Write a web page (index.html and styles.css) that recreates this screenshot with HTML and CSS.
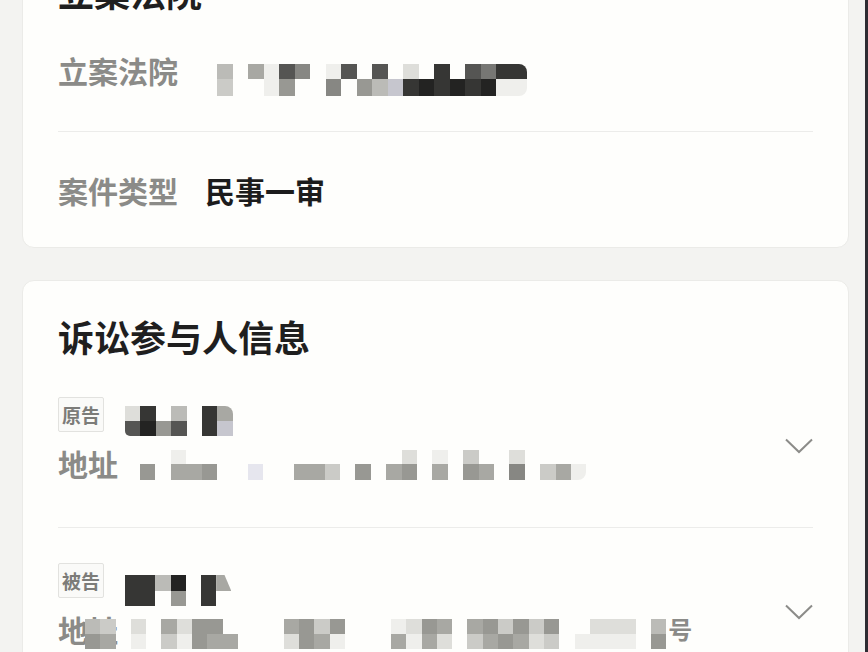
FILE: index.html
```html
<!DOCTYPE html>
<html lang="zh-CN">
<head>
<meta charset="utf-8">
<title>案件信息</title>
<link rel="stylesheet" href="styles.css">
</head>
<body>
<div class="screen">
  <div class="feed">
    <section class="card card-first">
      <h2 class="card-title">立案法院</h2>
      <div class="field">
        <span class="field-label">立案法院</span>
        <div class="mosaic m-court">
          <i class="k4"></i><i></i><i class="k5"></i><i class="k1"></i><i class="k9"></i><i class="k7"></i><i></i><i class="k1"></i><i class="k9"></i><i></i><i class="k9"></i><i></i><i class="k2"></i><i></i><i class="k10"></i><i></i><i class="k9"></i><i class="k8"></i><i class="k10"></i><i class="k10 r-tr"></i>
          <i class="k3"></i><i></i><i></i><i class="k1"></i><i class="k6"></i><i></i><i></i><i class="k7"></i><i></i><i class="k6"></i><i class="k4"></i><i class="kb"></i><i class="k10"></i><i class="k11"></i><i class="k10"></i><i class="k11"></i><i class="k10"></i><i class="k11"></i><i class="k1"></i><i class="k1 r-br"></i>
        </div>
      </div>
      <div class="field field-last">
        <span class="field-label">案件类型</span>
        <span class="field-value">民事一审</span>
      </div>
    </section>

    <section class="card card-parties">
      <h2 class="card-title">诉讼参与人信息</h2>

      <div class="party">
        <div class="party-info">
          <div class="party-head">
            <span class="tag">原告</span>
            <div class="mosaic m-name">
              <i class="k2"></i><i class="k10"></i><i></i><i class="k4"></i><i></i><i class="k10"></i><i class="k5 r-tr"></i>
              <i class="k9 r-bl"></i><i class="k11"></i><i class="k6"></i><i class="k9"></i><i></i><i class="k10"></i><i class="kb"></i>
            </div>
          </div>
          <div class="addr">
            <span class="field-label">地址</span>
            <div class="mosaic m-addr1">
              <i></i><i></i><i class="k1"></i><i></i><i></i><i></i><i></i><i></i><i></i><i></i><i></i><i></i><i></i><i></i><i></i><i></i><i></i><i class="k2"></i><i></i><i class="k1"></i><i></i><i class="k3"></i><i></i><i></i><i class="k2"></i><i></i><i></i><i></i><i></i>
              <i class="k6"></i><i></i><i class="k5"></i><i class="k5"></i><i class="k6"></i><i></i><i></i><i class="kl"></i><i></i><i></i><i class="k5"></i><i class="k5"></i><i class="k3"></i><i></i><i class="k6"></i><i></i><i class="k5"></i><i class="k6"></i><i></i><i class="k5"></i><i></i><i class="k6"></i><i class="k5"></i><i></i><i class="k7"></i><i></i><i class="k3"></i><i class="k5"></i><i class="k1 r-br"></i>
            </div>
          </div>
        </div>
        <svg class="chevron" width="28" height="16" viewBox="0 0 28 16"><polyline points="1,1.5 14,14 27,1.5" fill="none" stroke="#8c8c89" stroke-width="2"/></svg>
      </div>

      <div class="party">
        <div class="party-info">
          <div class="party-head">
            <span class="tag">被告</span>
            <div class="mosaic m-name2">
              <i class="k10"></i><i class="k10"></i><i class="k4"></i><i class="k11"></i><i></i><i class="k10"></i><i class="k5 tri"></i>
              <i class="k10"></i><i class="k10"></i><i></i><i class="k6"></i><i></i><i class="k10"></i><i></i>
            </div>
          </div>
          <div class="addr">
            <span class="field-label">地址</span>
            <div class="mosaic m-addr2">
              <i class="k4"></i><i class="k3"></i><i></i><i class="k2"></i><i></i><i class="k5"></i><i class="k2"></i><i class="k6"></i><i class="k6"></i><i></i><i></i><i></i><i></i><i class="k5"></i><i class="k6"></i><i class="k3"></i><i class="k6"></i><i></i><i></i><i></i><i class="k1"></i><i class="k2"></i><i class="k6"></i><i class="k5"></i><i></i><i class="k5"></i><i class="k6"></i><i class="k3"></i><i class="k6"></i><i class="k3"></i><i class="k6"></i><i></i><i></i><i class="k2"></i><i class="k2"></i><i class="k2"></i><i></i><i class="k4"></i>
              <i class="k6"></i><i class="k5"></i><i></i><i class="k1"></i><i></i><i class="k3"></i><i class="k1"></i><i class="k6"></i><i class="k5"></i><i class="k5"></i><i></i><i></i><i></i><i class="k2"></i><i class="k6"></i><i class="k5"></i><i class="k1"></i><i></i><i></i><i></i><i class="k5"></i><i class="k1"></i><i class="k5"></i><i class="k2"></i><i></i><i class="k3"></i><i class="k5"></i><i class="k6"></i><i class="k5"></i><i class="k2"></i><i class="k3"></i><i></i><i class="k1"></i><i class="k1"></i><i class="k1"></i><i class="k1"></i><i></i><i class="k6"></i>
            </div>
            <span class="addr-tail">号</span>
          </div>
        </div>
        <svg class="chevron" width="28" height="16" viewBox="0 0 28 16"><polyline points="1,1.5 14,14 27,1.5" fill="none" stroke="#8c8c89" stroke-width="2"/></svg>
      </div>
    </section>
  </div>
  <div class="edge"></div>
</div>
</body>
</html>
```

FILE: styles.css
```css
* {
  box-sizing: border-box;
}

html, body {
  margin: 0;
  padding: 0;
  height: 652px;
  overflow: hidden;
}

body {
  background: #f3f3f1;
  font-family: "Noto Sans CJK SC", "Noto Sans", sans-serif;
  color: #1e1e1e;
}

.screen {
  display: flex;
  height: 652px;
  overflow: hidden;
}

.feed {
  flex: 1;
  padding: 0 16px 0 22px;
  display: flex;
  flex-direction: column;
  gap: 32px;
}

.edge {
  width: 3px;
  background: #2e2b33;
  flex-shrink: 0;
}

.card {
  background: #fefefc;
  border: 1px solid #ebebe8;
  border-radius: 12px;
  padding: 0 35px;
}

.card-first {
  margin-top: -67px;
  padding-top: 35px;
}

.card-parties {
  padding-top: 33px;
  flex: 1;
}

.card-title {
  margin: 0;
  font-size: 36px;
  line-height: 44px;
  font-weight: 700;
  color: #1f1f1f;
}

.card-parties .card-title {
  margin-bottom: 4px;
}

.field {
  display: flex;
  align-items: flex-start;
  padding: 42px 0 46px;
  border-bottom: 1px solid #ececea;
}

.field-last {
  border-bottom: none;
  padding-top: 43px;
  padding-bottom: 42px;
}

.field-label {
  font-size: 30px;
  line-height: 30px;
  font-weight: 700;
  color: #8b8b88;
  white-space: nowrap;
}

.field-value {
  margin-left: 27px;
  font-size: 30px;
  line-height: 30px;
  font-weight: 700;
  color: #1c1c1c;
}

.mosaic {
  display: grid;
  flex-shrink: 0;
}

.mosaic i {
  display: block;
}

.m-court {
  margin-left: 39px;
  margin-top: 9px;
  margin-bottom: -11px;
  grid-template-columns: repeat(20, 15.5px);
  grid-template-rows: 15px 17px;
}

.m-name {
  margin-top: 9px;
  margin-bottom: -4px;
  grid-template-columns: repeat(7, 15.4px);
  grid-template-rows: 15px 15px;
}

.m-name2 {
  margin-top: 12px;
  margin-bottom: -8px;
  grid-template-columns: repeat(7, 15.2px);
  grid-template-rows: 16px 15px;
}

.m-addr1 {
  margin-left: 22px;
  margin-top: 2px;
  margin-bottom: -2px;
  grid-template-columns: repeat(29, 15.4px);
  grid-template-rows: 14px 16px;
}

.m-addr2 {
  margin-left: -33px;
  margin-top: 5px;
  margin-bottom: -5px;
  grid-template-columns: repeat(38, 15.3px);
  grid-template-rows: 15px 15px;
}

.addr-tail {
  margin-left: 2px;
  font-size: 24px;
  line-height: 30px;
  font-weight: 700;
  color: #8b8b88;
}

.k1 { background: #efefec; }
.k2 { background: #dededa; }
.k3 { background: #cbcbc7; }
.k4 { background: #bbbbb7; }
.k5 { background: #a8a8a3; }
.k6 { background: #989893; }
.k7 { background: #878783; }
.k8 { background: #777774; }
.k9 { background: #555553; }
.k10 { background: #363634; }
.k11 { background: #232322; }
.kb { background: #c6c6ce; }
.kl { background: #e6e6ee; }

.r-tr { border-top-right-radius: 8px; }
.r-br { border-bottom-right-radius: 8px; }
.r-bl { border-bottom-left-radius: 5px; }
.tri { clip-path: polygon(0 0, 55% 0, 100% 100%, 0 100%); }

.party {
  display: flex;
  align-items: center;
  padding: 35px 0 49px;
  border-bottom: 1px solid #ececea;
}

.party-info {
  flex: 1;
  min-width: 0;
}

.party-head {
  display: flex;
  align-items: flex-start;
  gap: 21px;
  margin-bottom: 16px;
}

.tag {
  display: inline-block;
  font-size: 19px;
  line-height: 33px;
  padding: 0 3px;
  font-weight: 700;
  color: #7c7c79;
  background: #fafaf8;
  border: 1px solid #e2e2df;
  border-radius: 2px;
}

.addr {
  display: flex;
  align-items: flex-start;
}

.chevron {
  flex-shrink: 0;
  margin-top: 17px;
  margin-left: 12px;
}
```
